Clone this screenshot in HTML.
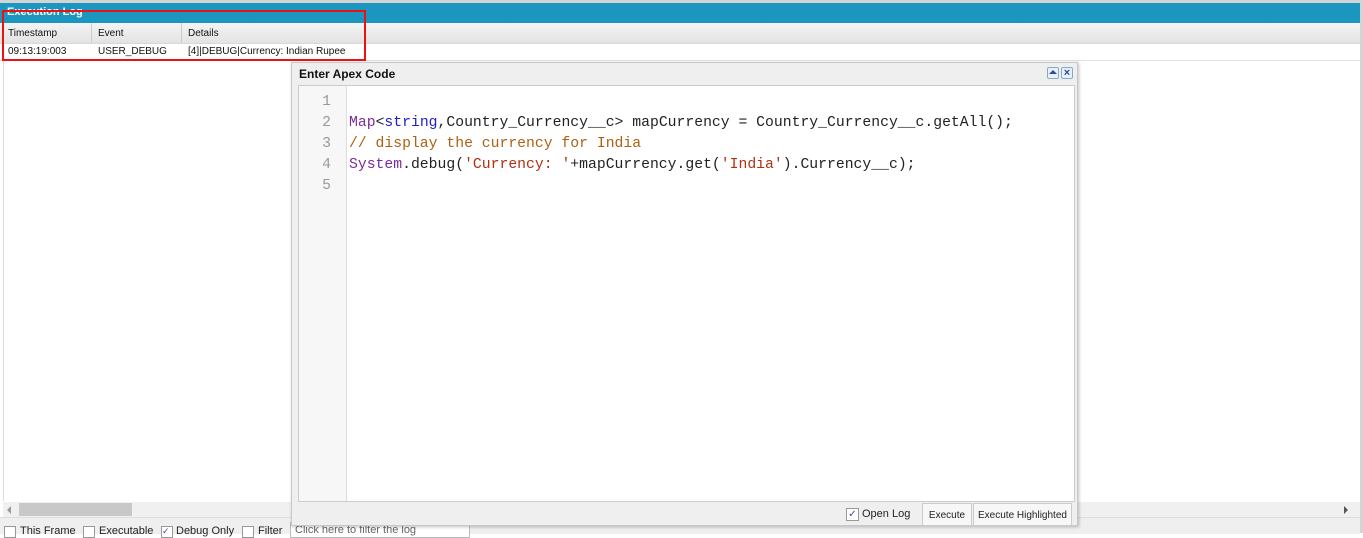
<!DOCTYPE html>
<html><head><style>
body{margin:0;width:1363px;height:533px;position:relative;overflow:hidden;background:#fff;font-family:"Liberation Sans",Tahoma,sans-serif;}
.abs{position:absolute;}
.mono{font-family:"Liberation Mono",monospace;font-size:14.75px;}
</style></head><body>
<div class="abs" style="left:0;top:0;width:1363px;height:3px;background:#d4d4d4"></div>
<div class="abs" style="left:1360px;top:0;width:3px;height:533px;background:#d4d4d4"></div>
<div class="abs" style="left:0;top:3px;width:1360px;height:20px;background:#1a96c0;color:#fff;font-size:11px;font-weight:bold;"><span style="position:absolute;left:7px;top:3px">Execution Log</span></div>
<div class="abs" style="left:0;top:23px;width:1360px;height:20px;background:linear-gradient(#f4f4f4,#e3e3e3);border-bottom:1px solid #d8d8d8;font-size:10px;color:#111">
<span class="abs" style="left:8px;top:5px">Timestamp</span>
<span class="abs" style="left:91px;top:0;width:1px;height:20px;background:#ccc"></span>
<span class="abs" style="left:98px;top:5px">Event</span>
<span class="abs" style="left:181px;top:0;width:1px;height:20px;background:#ccc"></span>
<span class="abs" style="left:188px;top:5px">Details</span>
</div>
<div class="abs" style="left:0;top:44px;width:1360px;height:16px;border-bottom:1px solid #e0e0e0;font-size:10px;color:#111">
<span class="abs" style="left:8px;top:2px">09:13:19:003</span>
<span class="abs" style="left:98px;top:2px">USER_DEBUG</span>
<span class="abs" style="left:188px;top:2px">[4]|DEBUG|Currency: Indian Rupee</span>
</div>
<div class="abs" style="left:2px;top:10px;width:360px;height:47px;border:2px solid #f01010"></div>
<div class="abs" style="left:3px;top:61px;width:1px;height:440px;background:#ddd"></div>
<div class="abs" style="left:3px;top:502px;width:1357px;height:15px;background:#f0f0f0"></div>
<div class="abs" style="left:19px;top:503px;width:113px;height:13px;background:#c8c8c8"></div>
<div class="abs" style="left:7px;top:506px;width:0;height:0;border:4px solid transparent;border-right-color:#999;border-left:0"></div>
<div class="abs" style="left:1344px;top:506px;width:0;height:0;border:4px solid transparent;border-left-color:#555;border-right:0"></div>
<div class="abs" style="left:0;top:517px;width:1360px;height:16px;background:#efefef;border-top:1px solid #ddd;font-size:11px;color:#222">
<span class="abs" style="left:4px;top:8px;width:10px;height:10px;border:1px solid #999;background:#fff"></span><span class="abs" style="left:20px;top:7px">This Frame</span>
<span class="abs" style="left:83px;top:8px;width:10px;height:10px;border:1px solid #999;background:#fff"></span><span class="abs" style="left:99px;top:7px">Executable</span>
<span class="abs" style="left:161px;top:8px;width:10px;height:10px;border:1px solid #999;background:#fff;color:#44a;font-size:9px;line-height:9px">✓</span><span class="abs" style="left:176px;top:7px">Debug Only</span>
<span class="abs" style="left:242px;top:8px;width:10px;height:10px;border:1px solid #999;background:#fff"></span><span class="abs" style="left:258px;top:7px">Filter</span>
<span class="abs" style="left:290px;top:4px;width:174px;height:14px;border:1px solid #bbb;background:#fff;color:#666;padding-left:4px;line-height:14px">Click here to filter the log</span>
</div>
<div class="abs" style="left:291px;top:62px;width:785px;height:462px;background:#efefef;border:1px solid #c8c8c8;box-shadow:1px 1px 3px rgba(0,0,0,.25)">
<div class="abs" style="left:7px;top:4px;font-size:12px;font-weight:bold;color:#111">Enter Apex Code</div>
<div class="abs" style="left:755px;top:4px;width:10px;height:10px;border:1px solid #8ab;background:#e8f0ff;border-radius:2px"><div style="margin:2px 0 0 1px;width:0;height:0;border:4px solid transparent;border-bottom-color:#2a4a9a;border-top:0"></div></div>
<div class="abs" style="left:769px;top:4px;width:10px;height:10px;border:1px solid #8ab;background:#e8f0ff;border-radius:2px;color:#2a4a9a;font-size:11px;line-height:10px;text-align:center;font-weight:bold">×</div>
<div class="abs" style="left:6px;top:22px;width:775px;height:415px;background:#fff;border:1px solid #ccc">
<div class="abs" style="left:0;top:0;width:47px;height:415px;background:#f7f7f7;border-right:1px solid #ddd"></div>
<div class="abs mono" style="left:0;top:6px;width:32px;text-align:right;color:#999;line-height:21px">1<br>2<br>3<br>4<br>5</div>
<div class="abs mono" style="left:50px;top:6px;line-height:21px;white-space:pre;color:#222"><span> </span>
<span style="color:#7b2b9a">Map</span>&lt;<span style="color:#2020d0">string</span>,Country_Currency__c&gt; mapCurrency = Country_Currency__c.getAll();
<span style="color:#b06010">// display the currency for India</span>
<span style="color:#7b2b9a">System</span>.debug(<span style="color:#b03010">'Currency: '</span>+mapCurrency.get(<span style="color:#b03010">'India'</span>).Currency__c);
</div>
</div>
<div class="abs" style="left:554px;top:445px;width:11px;height:11px;border:1px solid #999;background:#fff;color:#44a;font-size:10px;line-height:11px;text-align:center">✓</div>
<div class="abs" style="left:570px;top:445px;font-size:11px;color:#222">Open Log</div>
<div class="abs" style="left:630px;top:440px;width:48px;height:21px;border:1px solid #ccc;background:#f7f7f7;font-size:10px;color:#222;text-align:center;line-height:24px">Execute</div>
<div class="abs" style="left:681px;top:440px;width:97px;height:21px;border:1px solid #ccc;background:#f7f7f7;font-size:10px;color:#222;text-align:center;line-height:24px">Execute Highlighted</div>
</div>
</body></html>
